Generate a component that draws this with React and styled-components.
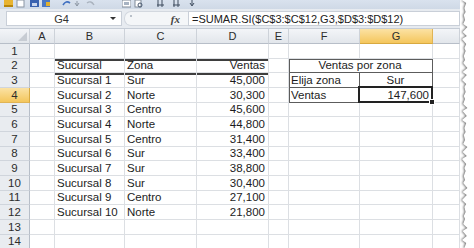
import React from 'react';
import styled, { createGlobalStyle } from 'styled-components';

const GlobalStyle = createGlobalStyle`
  body {
    margin: 0;
    background: #ffffff;
    font-family: 'Liberation Sans', Arial, sans-serif;
  }
`;

// 전체 화면
const Frame = styled.div`
  position: relative;
  width: 474px;
  height: 248px;
  overflow: hidden;
  background: #ffffff;
`;

const Sheet = styled.div`
  width: 460px;
  display: flex;
  flex-direction: column;
`;

// 빠른 실행 도구 모음 (위쪽이 잘린 상태)
const Toolbar = styled.div`
  height: 9px;
  display: flex;
  align-items: flex-end;
  gap: 3px;
  padding-left: 4px;
  background: linear-gradient(#d9e2ee, #cfd9e6);
  overflow: hidden;
`;

const ToolIcon = styled.svg`
  width: 9px;
  height: 9px;
  flex: none;
  margin-left: ${(p) => p.$gap || 0}px;
`;

// 수식 입력줄
const FormulaBar = styled.div`
  height: 19px;
  display: flex;
  align-items: center;
  background: #e7ebf0;
  border-bottom: 1px solid #c5ccd6;
  padding: 0 0 0 6px;
`;

const NameBox = styled.div`
  width: 116px;
  height: 15px;
  box-sizing: border-box;
  background: #ffffff;
  border: 1px solid #c9cfd8;
  display: flex;
  align-items: center;
  font-size: 11px;
  color: #333;
`;

const NameText = styled.span`
  flex: 1;
  text-align: center;
  padding-left: 6px;
`;

const DropArrow = styled.span`
  width: 0;
  height: 0;
  margin-right: 5px;
  border-left: 3px solid transparent;
  border-right: 3px solid transparent;
  border-top: 3px solid #333;
`;

const FxArea = styled.div`
  height: 15px;
  width: 64px;
  margin-left: 2px;
  display: flex;
  align-items: center;
  justify-content: space-between;
  background: #f4f6f8;
  border-radius: 7px 0 0 7px;
  border: 1px solid #d3d8df;
  border-right: none;
  box-sizing: border-box;
`;

const Dot = styled.span`
  width: 2px;
  height: 2px;
  margin-left: 5px;
  margin-top: -6px;
  background: #b9c0c9;
`;

const Fx = styled.span`
  font-family: 'Liberation Serif', 'Times New Roman', serif;
  font-style: italic;
  font-weight: bold;
  font-size: 11px;
  color: #444;
  margin-right: 8px;
`;

const FormulaInput = styled.div`
  flex: 1;
  height: 15px;
  box-sizing: border-box;
  background: #ffffff;
  border: 1px solid #c9cfd8;
  display: flex;
  align-items: center;
  padding-left: 3px;
  font-size: 11px;
  color: #222;
  white-space: nowrap;
  overflow: hidden;
`;

// 워크시트 격자
const Grid = styled.div`
  display: grid;
  grid-template-columns: 30px 25px 70px 72px 72px 20px 71px 73px 27px;
  grid-template-rows: 15px repeat(14, 14.67px);
`;

const HeaderCell = styled.div`
  box-sizing: border-box;
  display: flex;
  align-items: center;
  justify-content: center;
  font-size: 11px;
  color: #2c2c2c;
  background: ${(p) =>
    p.$active
      ? 'linear-gradient(#fbe2a4, #f4c65c)'
      : 'linear-gradient(#f3f5f8, #e2e6eb)'};
  border-right: 1px solid ${(p) => (p.$active ? '#e0b455' : '#cdd2d9')};
  border-bottom: 1px solid ${(p) => (p.$active ? '#d8a940' : '#b7bec8')};
`;

const Corner = styled(HeaderCell)`
  position: relative;
  &::after {
    content: '';
    position: absolute;
    right: 2px;
    bottom: 2px;
    border-left: 9px solid transparent;
    border-bottom: 9px solid #c7ccd3;
  }
`;

const RowHeader = styled(HeaderCell)`
  font-size: 11.5px;
  background: ${(p) =>
    p.$active ? 'linear-gradient(#fbe2a4, #f4c65c)' : '#e9ecf0'};
  border-right: 1px solid ${(p) => (p.$active ? '#d8a940' : '#b7bec8')};
  border-bottom: 1px solid ${(p) => (p.$active ? '#e0b455' : '#d0d5dc')};
`;

const Cell = styled.div`
  position: relative;
  box-sizing: border-box;
  display: flex;
  align-items: flex-end;
  justify-content: ${(p) =>
    p.$align === 'right' ? 'flex-end' : p.$align === 'center' ? 'center' : 'flex-start'};
  padding: 0 3px 0 2px;
  font-size: 11.5px;
  line-height: 14px;
  color: #1c1c1c;
  white-space: nowrap;
  grid-column: ${(p) => (p.$span ? `span ${p.$span}` : 'auto')};
  border-right: 1px solid ${(p) => (p.$box ? '#5c5c5c' : '#dcdfe3')};
  border-bottom: 1px solid ${(p) => (p.$box ? '#5c5c5c' : '#dcdfe3')};
  box-shadow: ${(p) =>
    [
      p.$rule && `inset 0 2px 0 #3e3e3e`,
      p.$boxTop && `inset 0 1px 0 #5c5c5c`,
      p.$boxLeft && `inset 1px 0 0 #5c5c5c`,
    ]
      .filter(Boolean)
      .join(', ') || 'none'};

  ${(p) =>
    p.$selected &&
    `
    &::after {
      content: '';
      position: absolute;
      left: -2px;
      top: -2px;
      right: -1px;
      bottom: -1px;
      border: 2px solid #222;
    }
    &::before {
      content: '';
      position: absolute;
      right: -3px;
      bottom: -3px;
      width: 4px;
      height: 4px;
      background: #222;
      border: 1px solid #fff;
      z-index: 2;
    }
  `}
`;

// 찢어진 오른쪽 가장자리
const TornEdge = styled.svg`
  position: absolute;
  top: 0;
  right: 0;
  width: 22px;
  height: 248px;
`;

const columns = ['A', 'B', 'C', 'D', 'E', 'F', 'G', ''];

const data = [
  ['Sucursal 1', 'Sur', '45,000'],
  ['Sucursal 2', 'Norte', '30,300'],
  ['Sucursal 3', 'Centro', '45,600'],
  ['Sucursal 4', 'Norte', '44,800'],
  ['Sucursal 5', 'Centro', '31,400'],
  ['Sucursal 6', 'Sur', '33,400'],
  ['Sucursal 7', 'Sur', '38,800'],
  ['Sucursal 8', 'Sur', '30,400'],
  ['Sucursal 9', 'Centro', '27,100'],
  ['Sucursal 10', 'Norte', '21,800'],
];

function tornPath() {
  const pts = [];
  let y = 0;
  let i = 0;
  while (y <= 250) {
    const x = 8 + (i % 2 === 0 ? 0 : 3) + ((i * 7) % 5) * 0.6;
    pts.push(`${x.toFixed(1)},${y}`);
    y += 3 + ((i * 5) % 3);
    i += 1;
  }
  return pts;
}

const edge = tornPath();

function rightSide(row) {
  // F, G, H 셀 (행 번호 기준)
  if (row === 2) {
    return [
      <Cell key="f" $span={2} $align="center" $box $boxTop $boxLeft>
        Ventas por zona
      </Cell>,
      <Cell key="h" />,
    ];
  }
  if (row === 3) {
    return [
      <Cell key="f" $box $boxLeft>Elija zona</Cell>,
      <Cell key="g" $box $align="center">Sur</Cell>,
      <Cell key="h" />,
    ];
  }
  if (row === 4) {
    return [
      <Cell key="f" $box $boxLeft>Ventas</Cell>,
      <Cell key="g" $box $align="right" $selected>147,600</Cell>,
      <Cell key="h" />,
    ];
  }
  return [<Cell key="f" />, <Cell key="g" />, <Cell key="h" />];
}

function leftSide(row) {
  // B, C, D 셀
  if (row === 2) {
    return [
      <Cell key="b" $rule>Sucursal</Cell>,
      <Cell key="c" $rule>Zona</Cell>,
      <Cell key="d" $rule $align="right">Ventas</Cell>,
    ];
  }
  const item = data[row - 3];
  if (item) {
    return [
      <Cell key="b" $rule={row === 3}>{item[0]}</Cell>,
      <Cell key="c" $rule={row === 3}>{item[1]}</Cell>,
      <Cell key="d" $rule={row === 3} $align="right">{item[2]}</Cell>,
    ];
  }
  return [<Cell key="b" />, <Cell key="c" />, <Cell key="d" />];
}

const App = () => {
  const rows = Array.from({ length: 14 }, (_, i) => i + 1);
  return (
    <Frame>
      <GlobalStyle />
      <Sheet>
        <Toolbar>
          <ToolIcon viewBox="0 0 9 9">
            <rect x="0" y="0" width="9" height="7" fill="#e8b431" />
            <rect x="0" y="5" width="9" height="2" fill="#b8860b" />
          </ToolIcon>
          <ToolIcon viewBox="0 0 9 9">
            <rect x="1" y="0" width="7" height="7" fill="#fff" stroke="#8a95a3" />
          </ToolIcon>
          <ToolIcon viewBox="0 0 9 9" $gap={2}>
            <rect x="0" y="0" width="9" height="7" fill="#3a62b0" />
            <rect x="2" y="3" width="5" height="3" fill="#c9d6ee" />
          </ToolIcon>
          <ToolIcon viewBox="0 0 9 9">
            <rect x="0" y="0" width="8" height="7" fill="#4b78c4" />
            <rect x="4" y="2" width="4" height="4" fill="#e0b030" />
          </ToolIcon>
          <ToolIcon viewBox="0 0 9 9" $gap={8}>
            <path d="M1 5 Q4 0 8 3" stroke="#3f6fc0" strokeWidth="1.6" fill="none" />
          </ToolIcon>
          <ToolIcon viewBox="0 0 9 9">
            <path d="M3 6 L3 1 M1 3 L3 6 L5 3" stroke="#8d97a4" strokeWidth="1" fill="none" />
          </ToolIcon>
          <ToolIcon viewBox="0 0 9 9">
            <path d="M8 5 Q5 0 1 3" stroke="#aab3be" strokeWidth="1.4" fill="none" />
          </ToolIcon>
          <ToolIcon viewBox="0 0 9 9" $gap={24}>
            <rect x="0" y="0" width="9" height="7" fill="#fff" stroke="#7f8a98" />
            <rect x="2" y="2" width="5" height="3" fill="#a7b3c2" />
          </ToolIcon>
          <ToolIcon viewBox="0 0 9 9">
            <rect x="1" y="0" width="6" height="7" fill="#fff" stroke="#7f8a98" />
            <circle cx="6" cy="5" r="2" fill="none" stroke="#4a5a70" />
          </ToolIcon>
          <ToolIcon viewBox="0 0 9 9" $gap={10}>
            <path d="M2 0 V7 M6 0 V7 M1 5 H8" stroke="#3e4c5e" strokeWidth="1" />
          </ToolIcon>
          <ToolIcon viewBox="0 0 9 9" $gap={4}>
            <path d="M2 0 V7 M6 0 V7 M1 5 H8" stroke="#3e4c5e" strokeWidth="1" />
          </ToolIcon>
          <ToolIcon viewBox="0 0 9 9" $gap={4}>
            <path d="M4 0 V5 M2 3 L4 6 L6 3" stroke="#3e4c5e" strokeWidth="1" fill="none" />
          </ToolIcon>
        </Toolbar>

        <FormulaBar>
          <NameBox>
            <NameText>G4</NameText>
            <DropArrow />
          </NameBox>
          <FxArea>
            <Dot />
            <Fx>fx</Fx>
          </FxArea>
          <FormulaInput>=SUMAR.SI($C$3:$C$12,G3,$D$3:$D$12)</FormulaInput>
        </FormulaBar>

        <Grid>
          <Corner />
          {columns.map((c) => (
            <HeaderCell key={c || 'h'} $active={c === 'G'}>
              {c}
            </HeaderCell>
          ))}
          {rows.map((r) => (
            <React.Fragment key={r}>
              <RowHeader $active={r === 4}>{r}</RowHeader>
              <Cell />
              {leftSide(r)}
              <Cell />
              {rightSide(r)}
            </React.Fragment>
          ))}
        </Grid>
      </Sheet>

      <TornEdge viewBox="0 0 22 248">
        <defs>
          <filter id="tornShadow" x="-50%" y="0" width="200%" height="100%">
            <feGaussianBlur stdDeviation="0.8" />
          </filter>
        </defs>
        <polygon
          points={`${edge.join(' ')} 22,250 22,0`}
          fill="#6b6b6b"
          filter="url(#tornShadow)"
          transform="translate(1,0)"
        />
        <polygon points={`${edge.join(' ')} 22,250 22,0`} fill="#ffffff" transform="translate(2,0)" />
      </TornEdge>
    </Frame>
  );
};

export default App;
